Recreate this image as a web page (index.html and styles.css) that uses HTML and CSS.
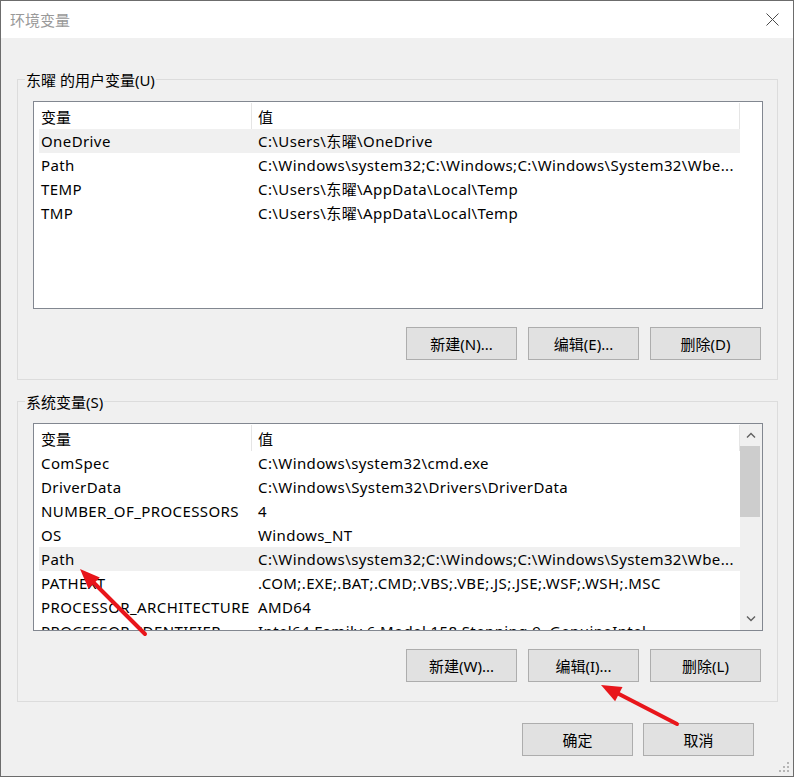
FILE: index.html
```html
<!DOCTYPE html>
<html lang="zh-CN">
<head>
  <meta charset="UTF-8">
  <title>环境变量</title>
  <link rel="stylesheet" href="styles.css">
</head>
<body>
  <div class="window">
    <!-- Title bar -->
    <div class="titlebar">
      <span class="title">环境变量</span>
      <svg class="close" width="13" height="13" viewBox="0 0 13 13">
        <path d="M0.5 0.5 L12.5 12.5 M12.5 0.5 L0.5 12.5" stroke="#4a4a4a" stroke-width="1" fill="none"/>
      </svg>
    </div>

    <div class="content">
      <!-- User variables -->
      <div class="group">
        <div class="group-title">东曜 的用户变量(U)</div>
        <div class="list">
          <div class="list-view">
            <div class="list-head">
              <div class="cell name">变量</div>
              <div class="cell value">值</div>
            </div>
            <div class="row selected">
              <div class="cell name">OneDrive</div>
              <div class="cell value">C:\Users\东曜\OneDrive</div>
            </div>
            <div class="row">
              <div class="cell name">Path</div>
              <div class="cell value">C:\Windows\system32;C:\Windows;C:\Windows\System32\Wbe...</div>
            </div>
            <div class="row">
              <div class="cell name">TEMP</div>
              <div class="cell value">C:\Users\东曜\AppData\Local\Temp</div>
            </div>
            <div class="row">
              <div class="cell name">TMP</div>
              <div class="cell value">C:\Users\东曜\AppData\Local\Temp</div>
            </div>
          </div>
        </div>
        <div class="buttons">
          <button class="btn">新建(N)...</button>
          <button class="btn">编辑(E)...</button>
          <button class="btn">删除(D)</button>
        </div>
      </div>

      <!-- System variables -->
      <div class="group">
        <div class="group-title">系统变量(S)</div>
        <div class="list">
          <div class="list-view">
            <div class="list-head">
              <div class="cell name">变量</div>
              <div class="cell value">值</div>
            </div>
            <div class="row">
              <div class="cell name">ComSpec</div>
              <div class="cell value">C:\Windows\system32\cmd.exe</div>
            </div>
            <div class="row">
              <div class="cell name">DriverData</div>
              <div class="cell value">C:\Windows\System32\Drivers\DriverData</div>
            </div>
            <div class="row">
              <div class="cell name">NUMBER_OF_PROCESSORS</div>
              <div class="cell value">4</div>
            </div>
            <div class="row">
              <div class="cell name">OS</div>
              <div class="cell value">Windows_NT</div>
            </div>
            <div class="row selected">
              <div class="cell name">Path</div>
              <div class="cell value">C:\Windows\system32;C:\Windows;C:\Windows\System32\Wbe...</div>
            </div>
            <div class="row">
              <div class="cell name">PATHEXT</div>
              <div class="cell value">.COM;.EXE;.BAT;.CMD;.VBS;.VBE;.JS;.JSE;.WSF;.WSH;.MSC</div>
            </div>
            <div class="row">
              <div class="cell name">PROCESSOR_ARCHITECTURE</div>
              <div class="cell value">AMD64</div>
            </div>
            <div class="row">
              <div class="cell name">PROCESSOR_IDENTIFIER</div>
              <div class="cell value">Intel64 Family 6 Model 158 Stepping 9, GenuineIntel</div>
            </div>
          </div>
          <div class="scrollbar">
            <div class="scroll-btn">
              <svg width="10" height="6" viewBox="0 0 10 6"><polyline points="1,5.5 5,1.5 9,5.5" stroke="#606060" stroke-width="1.4" fill="none"/></svg>
            </div>
            <div class="thumb"></div>
            <div class="track"></div>
            <div class="scroll-btn">
              <svg width="10" height="6" viewBox="0 0 10 6"><polyline points="1,0.5 5,4.5 9,0.5" stroke="#606060" stroke-width="1.4" fill="none"/></svg>
            </div>
          </div>
        </div>
        <div class="buttons">
          <button class="btn">新建(W)...</button>
          <button class="btn">编辑(I)...</button>
          <button class="btn">删除(L)</button>
        </div>
      </div>

      <!-- OK / Cancel -->
      <div class="dialog-buttons">
        <button class="btn">确定</button>
        <button class="btn">取消</button>
      </div>
    </div>

    <!-- Resize grip -->
    <svg class="grip" width="11" height="11" viewBox="0 0 11 11">
      <rect x="8" y="0" width="2" height="2" fill="#b5b5b5"/>
      <rect x="4" y="4" width="2" height="2" fill="#b5b5b5"/>
      <rect x="8" y="4" width="2" height="2" fill="#b5b5b5"/>
      <rect x="0" y="8" width="2" height="2" fill="#b5b5b5"/>
      <rect x="4" y="8" width="2" height="2" fill="#b5b5b5"/>
      <rect x="8" y="8" width="2" height="2" fill="#b5b5b5"/>
    </svg>

    <!-- Red annotation arrows -->
    <svg class="annotations" width="794" height="777" viewBox="0 0 794 777">
      <line x1="145" y1="634" x2="93" y2="582" stroke="#e8161b" stroke-width="4" stroke-linecap="round"/>
      <polygon points="80,569 99.8,577.4 88.5,588.8" fill="#e8161b"/>
      <line x1="677" y1="724" x2="617" y2="693" stroke="#e8161b" stroke-width="4" stroke-linecap="round"/>
      <polygon points="601,685 622.5,687 615.1,701.2" fill="#e8161b"/>
    </svg>
  </div>
</body>
</html>
```

FILE: styles.css
```css
body {
  margin: 0;
  background: #fff;
  font-family: "Noto Sans", "Noto Sans CJK SC", sans-serif;
  font-size: 15px;
  color: #000;
}

/* Dialog window */
.window {
  position: relative;
  width: 794px;
  height: 777px;
  box-sizing: border-box;
  border: 1px solid #6c6c6c;
  display: flex;
  flex-direction: column;
  overflow: hidden;
}

.titlebar {
  height: 37px;
  background: #fff;
  display: flex;
  align-items: center;
  justify-content: space-between;
  padding: 0 14px 0 9px;
}

.title {
  color: #999;
  line-height: 20px;
}

.content {
  flex: 1;
  background: #f0f0f0;
  padding: 41px 15px 0 16px;
}

/* Group boxes */
.group {
  border: 1px solid #dcdcdc;
  padding: 0 14px 19px 15px;
}

.group + .group {
  margin-top: 21px;
}

.group-title {
  width: max-content;
  margin: -10px 0 0 -8px;
  padding: 0 1px;
  background: #f0f0f0;
  line-height: 20px;
}

/* List views */
.list {
  margin-top: 11px;
  height: 208px;
  box-sizing: border-box;
  border: 1px solid #828790;
  background: #fff;
  display: flex;
  overflow: hidden;
}

.list-view {
  flex: 1;
  min-width: 0;
  padding-left: 5px;
  overflow: hidden;
}

.list-head {
  display: flex;
  padding-top: 1px;
}

.list-head .cell {
  height: 26px;
  line-height: 28px;
  border-right: 1px solid #e5e5e5;
}

.row {
  display: flex;
  width: 701px;
  height: 24px;
  line-height: 24px;
}

.row.selected {
  background: #f0f0f0;
}

.row .cell {
  letter-spacing: 0.4px;
}

.cell {
  white-space: nowrap;
  overflow: hidden;
  box-sizing: border-box;
}

.cell.name {
  width: 213px;
  flex: none;
  padding-left: 2px;
}

.cell.value {
  width: 488px;
  flex: none;
  padding-left: 6px;
}

/* Scrollbar */
.scrollbar {
  width: 22px;
  flex: none;
  background: #f0f0f0;
  display: flex;
  flex-direction: column;
}

.scroll-btn {
  height: 22px;
  display: flex;
  align-items: center;
  justify-content: center;
}

.thumb {
  height: 71px;
  margin: 0 2px 0 0;
  background: #cdcdcd;
}

.track {
  flex: 1;
}

/* Buttons */
.buttons {
  display: flex;
  justify-content: flex-end;
  gap: 11px;
  margin-top: 18px;
  padding-right: 2px;
}

.btn {
  width: 111px;
  height: 33px;
  box-sizing: border-box;
  border: 1px solid #adadad;
  background: #e1e1e1;
  font-family: "Noto Sans", "Noto Sans CJK SC", sans-serif;
  font-size: 15px;
  color: #000;
  padding: 0;
}

.dialog-buttons {
  display: flex;
  justify-content: flex-end;
  gap: 10px;
  margin-top: 21px;
  padding-right: 24px;
}

/* Overlays */
.grip {
  position: absolute;
  right: 3px;
  bottom: 3px;
}

.annotations {
  position: absolute;
  left: -1px;
  top: -1px;
  pointer-events: none;
}
```
